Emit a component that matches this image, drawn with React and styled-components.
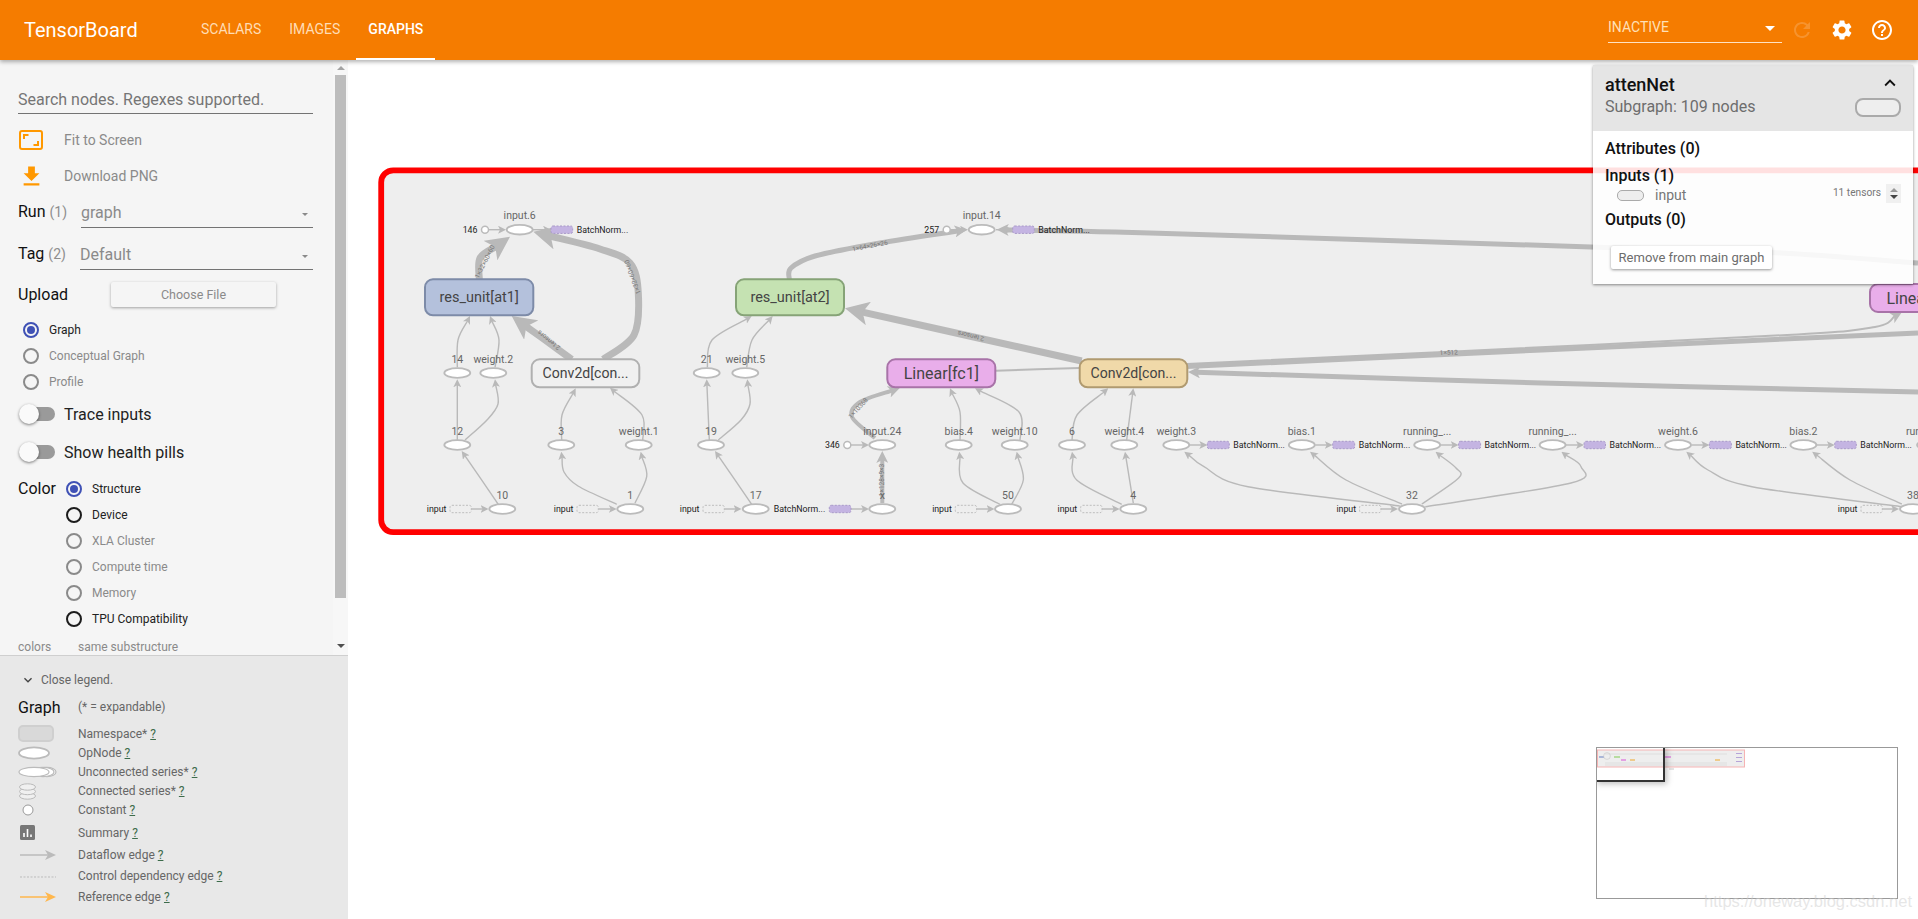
import React from "react";
import styled, { createGlobalStyle } from "styled-components";
import { MdSettings, MdHelpOutline, MdRefresh, MdFileDownload, MdExpandMore, MdExpandLess } from "react-icons/md";

const Global = createGlobalStyle`
  html, body { margin: 0; padding: 0; height: 100%; overflow: hidden; background: #fff; }
  body { font-family: Roboto, "Liberation Sans", sans-serif; }
  #root { height: 100%; }
`;

const Page = styled.div`
  display: flex;
  flex-direction: column;
  height: 100vh;
  overflow: hidden;
`;

/* ---------- Toolbar ---------- */
const Toolbar = styled.header`
  position: relative;
  z-index: 3;
  flex: 0 0 60px;
  display: flex;
  align-items: center;
  background: #f57c00;
  color: #fff;
  box-shadow: 0 2px 4px rgba(0, 0, 0, 0.3);
  padding: 0 24px;
`;
const Brand = styled.div`
  font-size: 20px;
  font-weight: 400;
  width: 165px;
`;
const Tabs = styled.nav`
  display: flex;
  gap: 4px;
  height: 60px;
`;
const Tab = styled.div`
  display: flex;
  align-items: center;
  justify-content: center;
  padding: 0 12px;
  height: 60px;
  box-sizing: border-box;
  font-size: 14px;
  font-weight: ${(p) => (p.$active ? 500 : 400)};
  color: ${(p) => (p.$active ? "#fff" : "#ffdcb5")};
  border-bottom: 2px solid ${(p) => (p.$active ? "#fff" : "transparent")};
`;
const ToolbarRight = styled.div`
  margin-left: auto;
  display: flex;
  align-items: center;
`;
const RunSelect = styled.div`
  position: relative;
  width: 174px;
  height: 28px;
  margin-top: -3px;
  box-sizing: border-box;
  border-bottom: 1px solid #ffe3c4;
  font-size: 14px;
  line-height: 24px;
  color: #ffe0b8;
`;
const RunCaret = styled.span`
  position: absolute;
  right: 7px;
  top: 11px;
  width: 0;
  height: 0;
  border-left: 5px solid transparent;
  border-right: 5px solid transparent;
  border-top: 5px solid #fff;
`;
const ToolIcon = styled.span`
  display: inline-flex;
  width: 24px;
  height: 24px;
  margin-left: ${(p) => p.$gap}px;
  color: ${(p) => (p.$dim ? "rgba(255,255,255,0.18)" : "#fff")};
  font-size: 24px;
`;

/* ---------- Body ---------- */
const Body = styled.div`
  flex: 1;
  display: flex;
  min-height: 0;
`;
const Sidebar = styled.aside`
  flex: 0 0 348px;
  display: flex;
  flex-direction: column;
  background: #f5f5f5;
  min-height: 0;
`;
const ControlsWrap = styled.div`
  flex: 0 0 595px;
  display: flex;
  overflow: hidden;
  border-bottom: 1px solid #cfcfcf;
`;
const Controls = styled.div`
  flex: 1;
  padding: 20px 20px 0 18px;
  overflow: hidden;
`;
const Scroll = styled.div`
  flex: 0 0 15px;
  display: flex;
  flex-direction: column;
  align-items: center;
  background: #f7f7f7;
  position: relative;
`;
const ScrollUp = styled.span`
  margin-top: 6px;
  width: 0;
  height: 0;
  border-left: 4px solid transparent;
  border-right: 4px solid transparent;
  border-bottom: 4px solid #a3a3a3;
`;
const ScrollThumb = styled.div`
  margin-top: 5px;
  width: 11px;
  height: 523px;
  background: #bdbdbd;
`;
const ScrollDown = styled.span`
  margin-top: 46px;
  width: 0;
  height: 0;
  border-left: 4px solid transparent;
  border-right: 4px solid transparent;
  border-top: 4px solid #505050;
`;
const Search = styled.div`
  height: 34px;
  box-sizing: border-box;
  border-bottom: 1px solid #737373;
  font-size: 16px;
  line-height: 40px;
  color: #757575;
  width: 295px;
`;
const ActionRow = styled.div`
  display: flex;
  align-items: center;
  height: 36px;
  margin-top: ${(p) => p.$mt || 0}px;
  font-size: 14px;
  color: #8a8a8a;
`;
const ActionIcon = styled.span`
  flex: 0 0 46px;
  display: flex;
  align-items: center;
  color: #ff9800;
`;
const SelectRow = styled.div`
  display: flex;
  align-items: flex-end;
  height: 34px;
  width: 295px;
  margin-top: ${(p) => p.$mt || 0}px;
`;
const SelectLabel = styled.div`
  flex: 0 0 ${(p) => p.$w}px;
  font-size: 16px;
  color: #111;
  height: 34px;
  line-height: 36px;
`;
const Count = styled.span`
  font-size: 14px;
  color: #8e8e8e;
  margin-left: 4px;
`;
const SelectBox = styled.div`
  flex: 1;
  position: relative;
  height: 34px;
  box-sizing: border-box;
  border-bottom: 1px solid #737373;
  font-size: 16px;
  line-height: 38px;
  color: #8a8a8a;
`;
const SelectCaret = styled.span`
  position: absolute;
  right: 5px;
  top: 19px;
  width: 0;
  height: 0;
  border-left: 3px solid transparent;
  border-right: 3px solid transparent;
  border-top: 3px solid #8a8a8a;
`;
const UploadRow = styled.div`
  display: flex;
  align-items: center;
  height: 25px;
  margin-top: 12px;
`;
const UploadLabel = styled.div`
  flex: 0 0 93px;
  font-size: 16px;
  color: #111;
`;
const ChooseButton = styled.div`
  width: 165px;
  height: 25px;
  display: flex;
  align-items: center;
  justify-content: center;
  background: #f5f5f5;
  border-radius: 2px;
  font-size: 12.5px;
  color: #8a8a8a;
  box-shadow: 0 1px 3px rgba(0, 0, 0, 0.35);
`;
const RadioGroup = styled.div`
  margin-top: ${(p) => p.$mt || 0}px;
  padding-left: 5px;
`;
const RadioRow = styled.div`
  display: flex;
  align-items: center;
  height: 26px;
  font-size: 12px;
  color: ${(p) => (p.$tone === "grey" ? "#8a8a8a" : "#222")};
`;
const RadioDot = styled.span`
  position: relative;
  flex: 0 0 16px;
  height: 16px;
  box-sizing: border-box;
  border-radius: 50%;
  margin-right: 10px;
  border: 2px solid ${(p) => (p.$on ? "#3f51b5" : p.$tone === "grey" ? "#8a8a8a" : "#1c1c1c")};
  &::after {
    content: "";
    display: ${(p) => (p.$on ? "block" : "none")};
    position: absolute;
    inset: 2px;
    border-radius: 50%;
    background: #3f51b5;
  }
`;
const ToggleRow = styled.div`
  display: flex;
  align-items: center;
  height: 38px;
  font-size: 16px;
  color: #222;
`;
const Switch = styled.span`
  position: relative;
  flex: 0 0 37px;
  height: 14px;
  margin-right: 9px;
  &::before {
    content: "";
    position: absolute;
    left: 8px;
    right: 0;
    top: 0;
    bottom: 0;
    border-radius: 7px;
    background: #9a9a9a;
  }
  &::after {
    content: "";
    position: absolute;
    left: 1px;
    top: -3px;
    width: 20px;
    height: 20px;
    border-radius: 50%;
    background: #fafafa;
    box-shadow: 0 1px 3px rgba(0, 0, 0, 0.5);
  }
`;
const ColorBlock = styled.div`
  display: flex;
  margin-top: 5px;
`;
const ColorLabel = styled.div`
  flex: 0 0 43px;
  font-size: 16px;
  color: #111;
  line-height: 26px;
`;
const Faded = styled.div`
  display: flex;
  font-size: 12px;
  color: #8a8a8a;
  height: 30px;
  line-height: 30px;
`;
const FadedKey = styled.span`
  flex: 0 0 60px;
`;

/* ---------- Legend ---------- */
const Legend = styled.section`
  flex: 1;
  background: #e8e8e8;
  padding: 14px 0 0 18px;
  font-size: 12px;
  color: #666;
`;
const LegendToggle = styled.div`
  display: flex;
  align-items: center;
  height: 20px;
  color: #666;
`;
const ToggleChevron = styled.span`
  display: inline-flex;
  font-size: 16px;
  color: #444;
  margin: 0 5px 0 2px;
`;
const LegendTitle = styled.div`
  display: grid;
  grid-template-columns: 60px 1fr;
  align-items: center;
  height: 34px;
  span:first-child { font-size: 16px; color: #111; }
`;
const LegendRow = styled.div`
  display: grid;
  grid-template-columns: 60px 1fr;
  align-items: center;
  height: ${(p) => p.$h}px;
`;
const Swatch = styled.svg`
  display: block;
  width: 42px;
  height: 20px;
  overflow: visible;
`;
const HelpLink = styled.span`
  color: #3c6b4a;
  text-decoration: underline;
  margin-left: 3px;
`;

/* ---------- Graph ---------- */
const Main = styled.main`
  flex: 1;
  position: relative;
  overflow: hidden;
  background: #fff;
`;
const Canvas = styled.svg`
  display: block;
  width: 100%;
  height: 100%;
  font-family: Roboto, sans-serif;
`;
const Frame = styled.rect`
  fill: #eeeeee;
  stroke: #ff0000;
  stroke-width: 5.8px;
`;
const EdgePath = styled.path`
  fill: none;
  stroke: #b9b9b9;
  stroke-width: ${(p) => p.$w}px;
`;
const EdgeLabel = styled.text`
  font-size: 6.5px;
  fill: #777;
  text-anchor: middle;
  dominant-baseline: central;
`;
const OpEllipse = styled.ellipse`
  fill: #fff;
  stroke: #bbb;
  stroke-width: 1.8px;
`;
const OpLabel = styled.text`
  font-size: 10.5px;
  fill: #666;
  text-anchor: middle;
  dominant-baseline: central;
`;
const SideLabel = styled.text`
  font-size: 8.8px;
  fill: #222;
  text-anchor: ${(p) => p.$anchor || "start"};
  dominant-baseline: central;
`;
const ConstCircle = styled.circle`
  fill: #fff;
  stroke: #bbb;
  stroke-width: 1.5px;
`;
const InputBox = styled.rect`
  fill: #eee;
  stroke: #bdbdbd;
  stroke-width: 1px;
  stroke-dasharray: 2 1.5;
`;
const BatchBox = styled.rect`
  fill: #c4b4e2;
  stroke: #a99ac8;
  stroke-width: 1px;
  stroke-dasharray: 2 1.5;
`;
const GroupBox = styled.rect`
  stroke-width: 2px;
  fill: ${(p) => p.$fill};
  stroke: ${(p) => p.$stroke};
`;
const GroupText = styled.text`
  font-size: ${(p) => p.$size}px;
  fill: #444;
  text-anchor: middle;
  dominant-baseline: central;
`;
const ArrowShape = styled.path`
  fill: #b9b9b9;
`;

/* ---------- Info panel ---------- */
const InfoCard = styled.aside`
  position: absolute;
  top: 5px;
  right: 5px;
  width: 320px;
  height: 219px;
  background: rgba(255, 255, 255, 0.88);
  box-shadow: 0 1px 3px rgba(0, 0, 0, 0.45);
  border-radius: 2px 2px 0 0;
`;
const InfoHead = styled.div`
  position: relative;
  height: 66px;
  box-sizing: border-box;
  background: #e5e5e5;
  padding: 9px 12px 0;
`;
const InfoTitle = styled.div`
  font-size: 18px;
  font-weight: 500;
  color: #111;
  line-height: 22px;
`;
const InfoSub = styled.div`
  font-size: 16px;
  line-height: 22px;
  color: #6d6d6d;
`;
const InfoChevron = styled.span`
  position: absolute;
  right: 12px;
  top: 7px;
  font-size: 22px;
  display: inline-flex;
  color: #111;
`;
const InfoShape = styled.span`
  position: absolute;
  right: 12px;
  top: 33px;
  width: 46px;
  height: 19px;
  box-sizing: border-box;
  border: 2px solid #aaa;
  border-radius: 8px;
  background: #eee;
`;
const InfoBody = styled.div`
  padding: 7px 12px 0;
`;
const InfoSection = styled.div`
  font-size: 16px;
  font-weight: 500;
  color: #111;
  line-height: 22px;
  margin-top: ${(p) => p.$mt || 0}px;
`;
const InputLine = styled.div`
  display: flex;
  align-items: center;
  height: 16px;
  margin-bottom: 2px;
  padding-left: 12px;
  font-size: 14px;
  color: #777;
`;
const InputShape = styled.span`
  width: 27px;
  height: 11px;
  box-sizing: border-box;
  border: 1.5px solid #aaa;
  border-radius: 5px;
  background: #eee;
  margin-right: 11px;
`;
const TensorCount = styled.span`
  margin-left: auto;
  font-size: 10.2px;
  color: #777;
  margin-top: -6px;
`;
const Stepper = styled.span`
  display: flex;
  flex-direction: column;
  align-items: center;
  justify-content: center;
  gap: 3px;
  width: 15px;
  height: 19px;
  margin: -3px 0 0 5px;
  background: #f0f0f0;
`;
const StepUp = styled.i`
  width: 0;
  height: 0;
  border-left: 4px solid transparent;
  border-right: 4px solid transparent;
  border-bottom: 4px solid #999;
`;
const StepDown = styled.i`
  width: 0;
  height: 0;
  border-left: 4px solid transparent;
  border-right: 4px solid transparent;
  border-top: 4px solid #444;
`;
const RemoveButton = styled.div`
  margin: 15px 0 0 6px;
  width: 161px;
  height: 23px;
  display: flex;
  align-items: center;
  justify-content: center;
  background: #fff;
  border-radius: 2px;
  font-size: 13px;
  color: #6d6d6d;
  box-shadow: 0 1px 3px rgba(0, 0, 0, 0.4);
`;

/* ---------- Minimap ---------- */
const Minimap = styled.div`
  position: absolute;
  left: 1248px;
  top: 687px;
  width: 302px;
  height: 152px;
  box-sizing: border-box;
  border: 1px solid #999;
  background: #fff;
  overflow: hidden;
`;
const MiniDrawing = styled.svg`
  display: block;
  width: 100%;
  height: 100%;
  filter: blur(0.6px);
`;
const MiniView = styled.div`
  position: absolute;
  left: -2px;
  top: -2px;
  width: 67px;
  height: 33px;
  border: 1px solid #333;
  border-width: 1px 2px 2px 1px;
  box-shadow: 2px 2px 6px rgba(0, 0, 0, 0.25);
`;
const Watermark = styled.div`
  position: absolute;
  right: 6px;
  bottom: 8px;
  font-family: "Liberation Sans", sans-serif;
  font-size: 16.5px;
  color: rgba(205, 205, 205, 0.5);
`;

/* ---------- Graph helpers ---------- */
function smooth(points, head) {
  const pts = points.map((p) => [...p]);
  const n = pts.length;
  const [ax, ay] = pts[n - 2];
  const [bx, by] = pts[n - 1];
  const len = Math.hypot(bx - ax, by - ay) || 1;
  const trim = Math.min(head * 0.7, len * 0.8);
  pts[n - 1] = [bx - ((bx - ax) / len) * trim, by - ((by - ay) / len) * trim];
  let d = `M${pts[0][0]},${pts[0][1]}`;
  for (let i = 0; i < n - 1; i++) {
    const p0 = pts[Math.max(i - 1, 0)];
    const p1 = pts[i];
    const p2 = pts[i + 1];
    const p3 = pts[Math.min(i + 2, n - 1)];
    const c1 = [p1[0] + (p2[0] - p0[0]) / 6, p1[1] + (p2[1] - p0[1]) / 6];
    const c2 = [p2[0] - (p3[0] - p1[0]) / 6, p2[1] - (p3[1] - p1[1]) / 6];
    d += ` C${c1[0]},${c1[1]} ${c2[0]},${c2[1]} ${p2[0]},${p2[1]}`;
  }
  return d;
}

const heads = { s: 8, m: 12, l: 24 };
const Edge = ({ pts, w = 1.4, head = "s", noHead }) => (
  <EdgePath
    $w={w}
    d={smooth(pts, noHead ? 0 : heads[head])}
    markerEnd={noHead ? undefined : `url(#arrow-${head})`}
  />
);

const ops = [
  [519.7, 229.7, "input.6"], [981.7, 229.7, "input.14"],
  [457.3, 373, "14"], [493.3, 373, "weight.2"], [706.7, 373, "21"], [745.3, 373, "weight.5"],
  [457.3, 445, "12"], [561.3, 445, "3"], [638.7, 445, "weight.1"], [711, 445, "19"],
  [882.3, 445, "input.24"], [958.7, 445, "bias.4"], [1014.7, 445, "weight.10"], [1072, 445, "6"],
  [1124.3, 445, "weight.4"], [1176.3, 445, "weight.3"], [1301.8, 445, "bias.1"],
  [1427.2, 445, "running_..."], [1552.6, 445, "running_..."], [1678, 445, "weight.6"],
  [1803.4, 445, "bias.2"], [1930, 445, "running_..."],
  [502.3, 509, "10"], [630.3, 509, "1"], [755.7, 509, "17"], [882.3, 509, "x"],
  [1008, 509, "50"], [1133.3, 509, "4"], [1412, 509, "32"], [1913, 509, "38"],
];

const inputs = [450, 577, 703, 955.3, 1080.7, 1359.6, 1861];

const batches = [
  [551, 229.7, 572.7], [1012.7, 229.7, 1034.3], [829.3, 509, 851], [1207.3, 445, 1229.3],
  [1332.7, 445, 1354.7], [1458.6, 445, 1480.6], [1584, 445, 1605.5], [1709.3, 445, 1731.4],
  [1834.7, 445, 1856.3],
];

const consts = [[485, 229.7, "146"], [946.7, 229.7, "257"], [847.3, 445, "346"]];

const groups = [
  [425, 279.3, 108.3, 36, "res_unit[at1]", "#b4c1dc", "#7d8ba8", 14.5],
  [736, 279.3, 108, 36, "res_unit[at2]", "#c5e2b2", "#86a377", 14.5],
  [531.7, 359.3, 107.6, 28, "Conv2d[con...", "#f0f0f0", "#b0b0b0", 14.1],
  [887.3, 359.3, 108, 28, "Linear[fc1]", "#e9aeea", "#a873a8", 16],
  [1079.7, 359.3, 107.6, 28, "Conv2d[con...", "#f0d9a9", "#b09a70", 14.1],
  [1870, 284, 108, 28, "Linear[fc2]", "#e9aeea", "#a873a8", 16],
];

const thinEdges = [
  [[498.3, 504.3], [461.7, 451]],
  [[457.3, 440], [457.3, 379.3]],
  [[465, 440], [487, 420], [498, 404], [495, 379.3]],
  [[616.7, 504.3], [578, 486], [564, 472], [561.3, 451.7]],
  [[635, 503], [646.7, 476.7], [640.7, 451.7]],
  [[561.7, 440], [562, 415], [575.7, 388.3]],
  [[642.7, 440], [642, 415], [610, 387.7]],
  [[457.3, 367.3], [458, 340], [470, 316]],
  [[495, 367.3], [499, 340], [490, 316]],
  [[751.7, 504.3], [715, 451]],
  [[709.3, 440], [706.7, 379.3]],
  [[718.3, 440], [741, 420], [750, 404], [747.3, 379.3]],
  [[707.3, 367.3], [712, 340], [751.7, 316]],
  [[746.7, 367.3], [752, 340], [772.7, 316]],
  [[960, 440], [960, 412], [950, 388.3]],
  [[1020, 440], [1019, 412], [975, 388.3]],
  [[1072, 440], [1077, 415], [1108.3, 388.3]],
  [[1126.7, 440], [1133.3, 388.3]],
  [[1000, 504.3], [963, 483], [959.3, 451.7]],
  [[1011.7, 504.3], [1023.3, 480], [1016.7, 451.7]],
  [[1121.7, 504.3], [1076.7, 480], [1072, 451.7]],
  [[1133.3, 503], [1125, 451.7]],
  [[1399.8, 506], [1248, 486.7], [1204, 466.7], [1184.3, 451.7]],
  [[1402, 504], [1346, 480], [1310, 451.7]],
  [[1421.8, 504], [1458.6, 478], [1456, 468], [1435.5, 451.7]],
  [[1425.3, 506.7], [1571, 483], [1581, 466.7], [1561.4, 451.7]],
  [[1901.8, 506.7], [1752, 486.7], [1708, 470], [1686.3, 451.7]],
  [[1901.8, 504], [1850, 480], [1812.2, 451.7]],
];

const shortEdges = [
  [488.5, 506, 229.7], [533, 551, 229.7], [950.2, 968, 229.7], [996, 1013, 229.7],
  [850.8, 869, 445], [470.7, 488.5, 509], [598.7, 616.7, 509], [724.3, 741.5, 509],
  [851, 869, 509], [976.7, 994.5, 509], [1102, 1119.7, 509], [1380.7, 1398, 509],
  [1882, 1899, 509], [1189.8, 1207.3, 445], [1315.3, 1332.7, 445], [1440.7, 1458.6, 445],
  [1566, 1584, 445], [1691.5, 1709.3, 445], [1817, 1834.7, 445],
];

const edgeLabels = [
  [485, 261.7, -63, "1×32×60×60"],
  [632.7, 277, 250, "1×32×60×60"],
  [549, 340, 219, "2 tensors"],
  [971, 335.7, 193.5, "2 tensors"],
  [870, 246, -11, "1×64×26×26"],
  [858.3, 408.3, -48, "1×10368"],
  [881.7, 480, -90, "1×128×9×3"],
  [1448.8, 352.7, -2, "1×512"],
];

const GraphView = () => (
  <Canvas viewBox="348 60 1570 859" preserveAspectRatio="xMinYMin slice">
    <defs>
      {Object.entries(heads).map(([k, s]) => (
        <marker
          key={k}
          id={`arrow-${k}`}
          viewBox="0 0 10 10"
          refX="3"
          refY="5"
          markerWidth={s}
          markerHeight={s}
          markerUnits="userSpaceOnUse"
          orient="auto"
        >
          <ArrowShape d="M0,0 L10,5 L0,10 L2.5,5 Z" />
        </marker>
      ))}
    </defs>
    <Frame x="381.2" y="170.3" width="1600" height="361.8" rx="12" />

    {thinEdges.map((pts, i) => <Edge key={i} pts={pts} />)}
    {shortEdges.map(([a, b, y], i) => <Edge key={`s${i}`} pts={[[a, y], [b, y]]} />)}

    <Edge w={7} head="l" pts={[[479.3, 279.3], [480, 258], [510, 236.7]]} />
    <Edge w={7} head="l" pts={[[603.3, 359.3], [634, 335], [638.3, 293], [630, 263], [600, 249], [533.3, 231.7]]} />
    <Edge w={7} head="l" pts={[[571.7, 359.3], [545, 340], [511.7, 316]]} />
    <Edge w={5} head="m" pts={[[789.3, 279.3], [791, 268], [815, 256], [880, 243], [966.7, 229.7]]} />
    <Edge w={7} head="l" pts={[[1081.7, 361], [845, 308.3]]} />
    <Edge w={5} head="m" pts={[[1918, 263], [1762, 252], [1591, 247], [1150, 233], [996.7, 229.7]]} />
    <Edge w={2} pts={[[996, 370.7], [1079, 368]]} noHead />
    <Edge w={4} head="m" pts={[[875, 438], [852, 417], [860, 402], [900, 387.7]]} />
    <Edge w={4} head="m" pts={[[882.3, 503], [882.3, 451]]} />
    <Edge w={2} head="m" pts={[[1187, 364], [1449, 351.7], [1787, 335], [1875, 327], [1902, 312]]} />
    <Edge w={5} noHead pts={[[1187, 366.5], [1542, 350], [1918, 333]]} />
    <Edge w={5} head="m" pts={[[1918, 392], [1542, 383], [1188, 372]]} />

    {edgeLabels.map(([x, y, r, t], i) => (
      <EdgeLabel key={i} x={x} y={y} transform={`rotate(${r} ${x} ${y})`}>{t}</EdgeLabel>
    ))}

    {inputs.map((x) => (
      <g key={x}>
        <InputBox x={x} y="505.3" width="21.3" height="7.4" rx="2" />
        <SideLabel $anchor="end" x={x - 3.5} y="509">input</SideLabel>
      </g>
    ))}
    {batches.map(([x, y, x2], i) => (
      <g key={x}>
        <BatchBox x={x} y={y - 3.7} width={x2 - x} height="7.4" rx="2" />
        {i !== 2 && <SideLabel x={x2 + 4} y={y}>BatchNorm...</SideLabel>}
      </g>
    ))}
    <SideLabel x="773.7" y="509">BatchNorm...</SideLabel>

    {consts.map(([x, y, t]) => (
      <g key={t}>
        <ConstCircle cx={x} cy={y} r="3.5" />
        <SideLabel $anchor="end" x={x - 7.5} y={y}>{t}</SideLabel>
      </g>
    ))}
    {ops.map(([x, y, t]) => (
      <g key={`${x}-${y}`}>
        <OpEllipse cx={x} cy={y} rx="13" ry="4.8" />
        <OpLabel x={x} y={y - 14}>{t}</OpLabel>
      </g>
    ))}
    {groups.map(([x, y, w, h, t, f, s, size]) => (
      <g key={`${x}-${y}`}>
        <GroupBox x={x} y={y} width={w} height={h} rx="8" $fill={f} $stroke={s} />
        <GroupText $size={size} x={x + w / 2} y={y + h / 2}>{t}</GroupText>
      </g>
    ))}
  </Canvas>
);

const MiniMap = () => (
  <Minimap>
    <MiniDrawing viewBox="0 0 300 150">
      <rect x="0.5" y="2" width="147" height="17" fill="#eee" stroke="#f6b3b3" strokeWidth="1" />
      <rect x="2" y="8" width="5" height="2" fill="#aab6d8" />
      <rect x="17" y="8" width="6" height="2" fill="#b7dca0" />
      <rect x="24" y="11" width="5" height="2" fill="#e3a0e3" />
      <rect x="33" y="11" width="5" height="2" fill="#eecb8c" />
      <rect x="68" y="8" width="6" height="2" fill="#e3a0e3" />
      <rect x="118" y="11" width="5" height="2" fill="#eecb8c" />
      <rect x="139" y="5" width="6" height="1" fill="#b6a4d8" />
      <rect x="139" y="9" width="6" height="1" fill="#b6a4d8" />
      <rect x="139" y="13" width="6" height="1" fill="#b6a4d8" />
      <path d="M8 6 H130 M8 15 H130 M8 17 H130" stroke="#d4d4d4" strokeWidth="0.6" fill="none" />
      <circle cx="10" cy="8" r="3.4" fill="none" stroke="#ccc" strokeWidth="0.7" />
      <rect x="72" y="20.5" width="5" height="1" fill="#ccc" />
    </MiniDrawing>
    <MiniView />
  </Minimap>
);

const legendRows = [
  [19, "Namespace*", <rect key="r" x="1" y="2" width="34" height="15" rx="4" fill="#d9d9d9" stroke="#cfcfcf" strokeWidth="2" />],
  [19, "OpNode", <ellipse key="e" cx="16" cy="10" rx="15" ry="5.6" fill="#fff" stroke="#bbb" strokeWidth="1.8" />],
  [19, "Unconnected series*", (
    <g key="u" fill="#fff" stroke="#bbb" strokeWidth="1.2">
      <ellipse cx="29" cy="10" rx="9" ry="4.6" />
      <ellipse cx="25" cy="10" rx="11" ry="4.6" />
      <ellipse cx="16" cy="10" rx="15" ry="4.6" />
    </g>
  )],
  [19, "Connected series*", (
    <g key="c" fill="#f0f0f0" stroke="#bbb" strokeWidth="1">
      <ellipse cx="9.5" cy="15" rx="8" ry="3.2" />
      <ellipse cx="9.5" cy="10.5" rx="8" ry="3.2" />
      <ellipse cx="9.5" cy="6" rx="8" ry="3.2" />
    </g>
  )],
  [20.5, "Constant", <circle key="k" cx="10" cy="10" r="5" fill="#fff" stroke="#999" strokeWidth="1" />],
  [24, "Summary", (
    <g key="s">
      <rect x="2" y="2" width="15" height="15" rx="1.5" fill="#777" />
      <path d="M6 14V10M9.5 14V6M13 14V11.5" stroke="#fff" strokeWidth="1.6" fill="none" />
    </g>
  )],
  [20, "Dataflow edge", (
    <g key="d">
      <line x1="2" y1="10" x2="30" y2="10" stroke="#bbb" strokeWidth="1.5" />
      <path d="M27 5 L38 10 L27 15 L30 10 Z" fill="#bbb" />
    </g>
  )],
  [22, "Control dependency edge", <line key="x" x1="2" y1="11" x2="38" y2="11" stroke="#bbb" strokeWidth="1" strokeDasharray="2 1.5" />],
  [20, "Reference edge", (
    <g key="o">
      <line x1="2" y1="10" x2="30" y2="10" stroke="#ffb74d" strokeWidth="1.5" />
      <path d="M27 5 L38 10 L27 15 L30 10 Z" fill="#ffb74d" />
    </g>
  )],
];

const colorOptions = [
  ["Structure", "on"], ["Device", "dark"], ["XLA Cluster", "grey"],
  ["Compute time", "grey"], ["Memory", "grey"], ["TPU Compatibility", "dark"],
];

export default function App() {
  return (
    <Page>
      <Global />
      <Toolbar>
        <Brand>TensorBoard</Brand>
        <Tabs>
          <Tab>SCALARS</Tab>
          <Tab>IMAGES</Tab>
          <Tab $active>GRAPHS</Tab>
        </Tabs>
        <ToolbarRight>
          <RunSelect>
            INACTIVE
            <RunCaret />
          </RunSelect>
          <ToolIcon $dim $gap={8}><MdRefresh /></ToolIcon>
          <ToolIcon $gap={16}><MdSettings /></ToolIcon>
          <ToolIcon $gap={16}><MdHelpOutline /></ToolIcon>
        </ToolbarRight>
      </Toolbar>
      <Body>
        <Sidebar>
          <ControlsWrap>
            <Controls>
              <Search>Search nodes. Regexes supported.</Search>
              <ActionRow $mt={8}>
                <ActionIcon>
                  <svg width="26" height="22" viewBox="0 0 26 22" fill="none">
                    <rect x="2" y="2" width="22" height="18" rx="2" stroke="#ff9800" strokeWidth="2" />
                    <path d="M6 10V6H10.5M20 12V16H15.5" stroke="#ff9800" strokeWidth="2" />
                  </svg>
                </ActionIcon>
                Fit to Screen
              </ActionRow>
              <ActionRow>
                <ActionIcon><MdFileDownload size={27} /></ActionIcon>
                Download PNG
              </ActionRow>
              <SelectRow>
                <SelectLabel $w={63}>Run<Count>(1)</Count></SelectLabel>
                <SelectBox>graph<SelectCaret /></SelectBox>
              </SelectRow>
              <SelectRow $mt={8}>
                <SelectLabel $w={62}>Tag<Count>(2)</Count></SelectLabel>
                <SelectBox>Default<SelectCaret /></SelectBox>
              </SelectRow>
              <UploadRow>
                <UploadLabel>Upload</UploadLabel>
                <ChooseButton>Choose File</ChooseButton>
              </UploadRow>
              <RadioGroup $mt={10}>
                <RadioRow><RadioDot $on />Graph</RadioRow>
                <RadioRow $tone="grey"><RadioDot $tone="grey" />Conceptual Graph</RadioRow>
                <RadioRow $tone="grey"><RadioDot $tone="grey" />Profile</RadioRow>
              </RadioGroup>
              <ToggleRow><Switch />Trace inputs</ToggleRow>
              <ToggleRow><Switch />Show health pills</ToggleRow>
              <ColorBlock>
                <ColorLabel>Color</ColorLabel>
                <RadioGroup>
                  {colorOptions.map(([t, s]) => (
                    <RadioRow key={t} $tone={s}>
                      <RadioDot $on={s === "on"} $tone={s} />
                      {t}
                    </RadioRow>
                  ))}
                </RadioGroup>
              </ColorBlock>
              <Faded>
                <FadedKey>colors</FadedKey>
                same substructure
              </Faded>
            </Controls>
            <Scroll>
              <ScrollUp />
              <ScrollThumb />
              <ScrollDown />
            </Scroll>
          </ControlsWrap>
          <Legend>
            <LegendToggle>
              <ToggleChevron><MdExpandMore /></ToggleChevron>
              Close legend.
            </LegendToggle>
            <LegendTitle>
              <span>Graph</span>
              <span>(* = expandable)</span>
            </LegendTitle>
            {legendRows.map(([h, t, icon]) => (
              <LegendRow key={t} $h={h}>
                <Swatch viewBox="0 0 42 20">{icon}</Swatch>
                <span>{t}<HelpLink>?</HelpLink></span>
              </LegendRow>
            ))}
          </Legend>
        </Sidebar>
        <Main>
          <GraphView />
          <InfoCard>
            <InfoHead>
              <InfoTitle>attenNet</InfoTitle>
              <InfoSub>Subgraph: 109 nodes</InfoSub>
              <InfoChevron><MdExpandLess /></InfoChevron>
              <InfoShape />
            </InfoHead>
            <InfoBody>
              <InfoSection>Attributes (0)</InfoSection>
              <InfoSection $mt={5}>Inputs (1)</InfoSection>
              <InputLine>
                <InputShape />
                input
                <TensorCount>11 tensors</TensorCount>
                <Stepper><StepUp /><StepDown /></Stepper>
              </InputLine>
              <InfoSection $mt={6}>Outputs (0)</InfoSection>
              <RemoveButton>Remove from main graph</RemoveButton>
            </InfoBody>
          </InfoCard>
          <MiniMap />
          <Watermark>https://oneway.blog.csdn.net</Watermark>
        </Main>
      </Body>
    </Page>
  );
}
